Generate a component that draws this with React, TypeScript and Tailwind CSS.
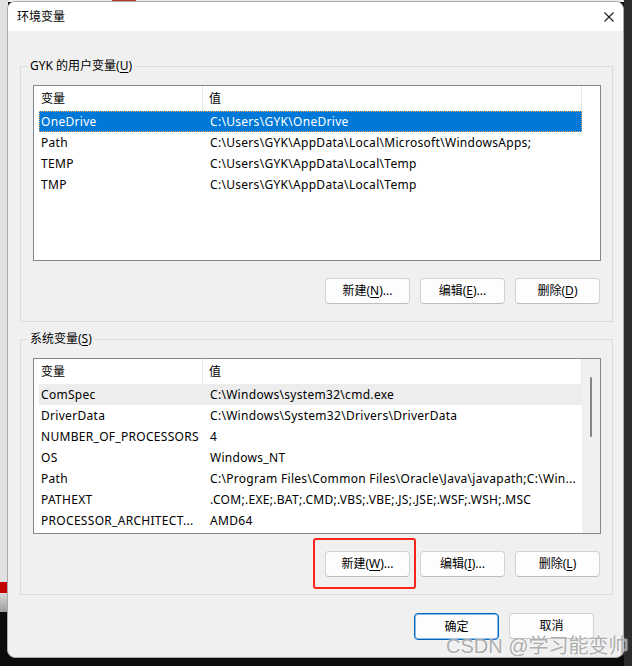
import clsx from "clsx";

interface VarRow {
  name: string;
  value: string;
  selected?: boolean;
  hover?: boolean;
}

const userVars: VarRow[] = [
  { name: "OneDrive", value: "C:\\Users\\GYK\\OneDrive", selected: true },
  { name: "Path", value: "C:\\Users\\GYK\\AppData\\Local\\Microsoft\\WindowsApps;" },
  { name: "TEMP", value: "C:\\Users\\GYK\\AppData\\Local\\Temp" },
  { name: "TMP", value: "C:\\Users\\GYK\\AppData\\Local\\Temp" },
];

const systemVars: VarRow[] = [
  { name: "ComSpec", value: "C:\\Windows\\system32\\cmd.exe", hover: true },
  { name: "DriverData", value: "C:\\Windows\\System32\\Drivers\\DriverData" },
  { name: "NUMBER_OF_PROCESSORS", value: "4" },
  { name: "OS", value: "Windows_NT" },
  { name: "Path", value: "C:\\Program Files\\Common Files\\Oracle\\Java\\javapath;C:\\Win..." },
  { name: "PATHEXT", value: ".COM;.EXE;.BAT;.CMD;.VBS;.VBE;.JS;.JSE;.WSF;.WSH;.MSC" },
  { name: "PROCESSOR_ARCHITECT...", value: "AMD64" },
];

// label with an underlined access key, e.g. 新建(N)...
function Access({ before, k, after }: { before: string; k: string; after: string }) {
  return (
    <span className="whitespace-nowrap">
      {before}
      <span className="underline underline-offset-2">{k}</span>
      {after}
    </span>
  );
}

function Button({ children, primary }: { children: React.ReactNode; primary?: boolean }) {
  return (
    <div
      className={clsx(
        "flex w-[85px] items-center justify-center rounded-[4px] bg-[#fdfdfd] text-black",
        primary
          ? "h-[27px] border border-[#0067c0] shadow-[inset_0_0_0_1px_rgba(0,103,192,0.45)]"
          : "h-[26px] border border-[#d2d2d2] border-b-[#bdbdbd]"
      )}
    >
      {children}
    </div>
  );
}

function VarList({ rows, scroll }: { rows: VarRow[]; scroll?: boolean }) {
  return (
    <div className="flex h-[176px] border border-[#828790] bg-white">
      <div className="flex flex-1 flex-col overflow-hidden">
        <div className="flex h-[25px] shrink-0">
          <div className="flex w-[169px] items-center border-r border-[#e5e5e5] pl-[7px]">变量</div>
          <div className="flex flex-1 items-center border-r border-[#e5e5e5] pl-[6px]">值</div>
        </div>
        {rows.map((r, i) => (
          <div
            key={i}
            className={clsx(
              "ml-[5px] flex h-[21px] shrink-0 items-center tracking-[0.3px]",
              r.selected &&
                "bg-[#0078d7] text-white outline-1 outline-dotted outline-[#f0a860] -outline-offset-1",
              r.hover && "bg-[#ededed]"
            )}
          >
            <div className="w-[164px] overflow-hidden whitespace-nowrap pl-[2px]">{r.name}</div>
            <div className="flex-1 overflow-hidden whitespace-nowrap pl-[7px]">{r.value}</div>
          </div>
        ))}
      </div>
      <div className={clsx("w-[18px] shrink-0", scroll ? "bg-[#f0f0f0] pt-[18px]" : "bg-white")}>
        {scroll && <div className="ml-[8px] h-[60px] w-[2px] rounded-full bg-[#858585]" />}
      </div>
    </div>
  );
}

function Group({
  label,
  rows,
  scroll,
  buttons,
  className,
}: {
  label: React.ReactNode;
  rows: VarRow[];
  scroll?: boolean;
  buttons: React.ReactNode;
  className?: string;
}) {
  return (
    <fieldset className={clsx("ml-[12px] mr-[10px] border border-[#dcdcdc]", className)}>
      <legend className="ml-[7px] px-[2px] leading-[16px]">{label}</legend>
      <div className="pl-[12px] pr-[11px] pt-[11px] pb-[17px]">
        <VarList rows={rows} scroll={scroll} />
        <div className="mt-[17px] flex justify-end gap-[10px] pr-[1px]">{buttons}</div>
      </div>
    </fieldset>
  );
}

export default function App() {
  return (
    <div className="relative h-[666px] w-[632px] overflow-hidden bg-[#0c0c0c] font-['Noto_Sans','Noto_Sans_CJK_SC',sans-serif] text-[12px] leading-[16px] text-black">
      {/* desktop behind the dialog */}
      <div className="absolute left-0 top-0 h-[2px] w-[624px] bg-[#ececec]" />
      <div className="absolute left-[112px] top-0 h-[2px] w-[24px] bg-[#b3392b]" />
      <div className="absolute left-0 top-0 h-[582px] w-[8px] bg-[#e2e2e2]" />
      <div className="absolute left-0 top-[582px] h-[11px] w-[8px] bg-[#c30000]" />
      <div className="absolute left-0 top-[593px] h-[19px] w-[8px] bg-gradient-to-b from-[#dadada] to-[#9c9c9c]" />
      <div className="absolute right-0 top-0 h-full w-[8px] bg-[#2c2c2c]" />

      {/* dialog window */}
      <div className="relative ml-[7px] mt-[1px] flex h-[657px] w-[617px] flex-col overflow-hidden rounded-[8px] border border-[#a9a9a9] bg-[#f0f0f0]">
        <div className="flex h-[29px] shrink-0 items-center justify-between bg-white pl-[9px] pr-[9px]">
          <span className="text-[12px]">环境变量</span>
          <svg width="10" height="10" viewBox="0 0 10 10" className="mt-[1px]">
            <path d="M0.5 0.5 L9.5 9.5 M9.5 0.5 L0.5 9.5" stroke="#1a1a1a" strokeWidth="1.1" fill="none" />
          </svg>
        </div>

        <Group
          className="mt-[27px]"
          label={<Access before="GYK 的用户变量(" k="U" after=")" />}
          rows={userVars}
          buttons={
            <>
              <Button>
                <Access before="新建(" k="N" after=")..." />
              </Button>
              <Button>
                <Access before="编辑(" k="E" after=")..." />
              </Button>
              <Button>
                <Access before="删除(" k="D" after=")" />
              </Button>
            </>
          }
        />

        <Group
          className="mt-[9px]"
          label={<Access before="系统变量(" k="S" after=")" />}
          rows={systemVars}
          scroll
          buttons={
            <>
              <div className="relative">
                <Button>
                  <Access before="新建(" k="W" after=")..." />
                </Button>
                {/* red annotation box */}
                <div className="absolute -bottom-[12px] -left-[12px] -right-[6px] -top-[13px] rounded-[3px] border-2 border-[#ff2419]" />
              </div>
              <Button>
                <Access before="编辑(" k="I" after=")..." />
              </Button>
              <Button>
                <Access before="删除(" k="L" after=")" />
              </Button>
            </>
          }
        />

        <div className="mr-[29px] mt-[18px] flex justify-end gap-[10px]">
          <Button primary>确定</Button>
          <Button>取消</Button>
        </div>
      </div>

      {/* CSDN watermark */}
      <div className="absolute left-[446px] top-[634px] whitespace-nowrap font-['Liberation_Sans','Noto_Sans_CJK_SC',sans-serif] text-[20px] leading-[24px] text-[#a3a3a3]/90 [text-shadow:0_0_2px_#ffffff]">
        CSDN @学习能变帅
      </div>
    </div>
  );
}
